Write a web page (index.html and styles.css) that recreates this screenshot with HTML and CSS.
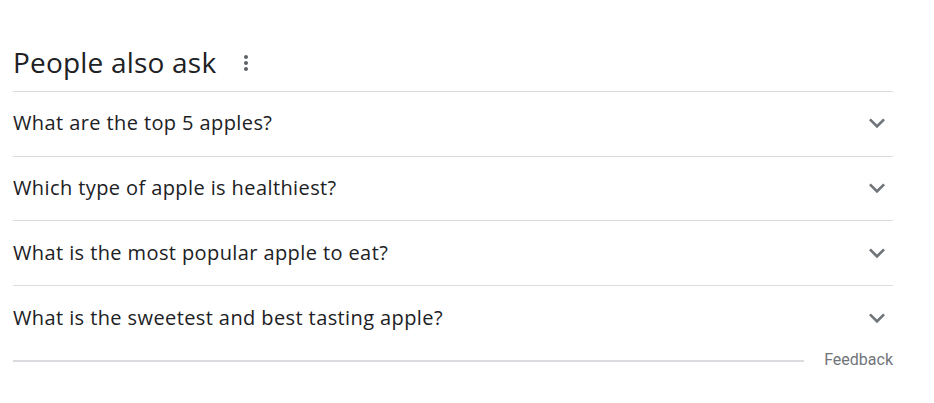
FILE: index.html
```html
<!DOCTYPE html>
<html>
<head>
<meta charset="utf-8">
<link rel="stylesheet" href="styles.css">
</head>
<body>
<div class="paa">
  <div class="head">
    <h2 class="title">People also ask</h2>
    <span class="more">
      <svg width="24" height="24" viewBox="0 0 24 24"><path fill="#5f6368" d="M12 8c1.1 0 2-.9 2-2s-.9-2-2-2-2 .9-2 2 .9 2 2 2zm0 2c-1.1 0-2 .9-2 2s.9 2 2 2 2-.9 2-2-.9-2-2-2zm0 6c-1.1 0-2 .9-2 2s.9 2 2 2 2-.9 2-2-.9-2-2-2z"/></svg>
    </span>
  </div>
  <div class="list">
    <div class="row"><span class="q">What are the top 5 apples?</span><svg class="chev" width="32" height="32" viewBox="0 0 24 24"><path fill="#70757a" d="M16.59 8.59L12 13.17 7.41 8.59 6 10l6 6 6-6z"/></svg></div>
    <div class="row"><span class="q">Which type of apple is healthiest?</span><svg class="chev" width="32" height="32" viewBox="0 0 24 24"><path fill="#70757a" d="M16.59 8.59L12 13.17 7.41 8.59 6 10l6 6 6-6z"/></svg></div>
    <div class="row"><span class="q">What is the most popular apple to eat?</span><svg class="chev" width="32" height="32" viewBox="0 0 24 24"><path fill="#70757a" d="M16.59 8.59L12 13.17 7.41 8.59 6 10l6 6 6-6z"/></svg></div>
    <div class="row"><span class="q">What is the sweetest and best tasting apple?</span><svg class="chev" width="32" height="32" viewBox="0 0 24 24"><path fill="#70757a" d="M16.59 8.59L12 13.17 7.41 8.59 6 10l6 6 6-6z"/></svg></div>
  </div>
  <div class="foot">
    <div class="line"></div>
    <span class="fb">Feedback</span>
  </div>
</div>
</body>
</html>
```
FILE: styles.css
```css
body {
  margin: 0;
  background: #fff;
  font-family: "Open Sans", Roboto, Arial, sans-serif;
  color: #202124;
}
.paa {
  width: 880px;
  margin-left: 13px;
  padding-top: 40px;
}
.head {
  display: flex;
  align-items: center;
  height: 52px;
  border-bottom: 1px solid #dadce0;
  box-sizing: border-box;
}
.title {
  margin: 0;
  font-weight: 400;
  font-size: 28px;
  letter-spacing: 0.2px;
  line-height: 40px;
  margin-top: -7px;
}
.more {
  display: flex;
  margin-left: 18px;
  margin-top: -6px;
}
.row {
  display: flex;
  align-items: center;
  justify-content: space-between;
  height: 64.7px;
  border-bottom: 1px solid #dadce0;
  box-sizing: border-box;
}
.row:last-child { border-bottom: none; }
.q {
  font-size: 20px;
  letter-spacing: 0.4px;
  margin-top: -2px;
}
.chev { margin-right: 0; margin-top: -1px; }
.foot {
  display: flex;
  align-items: center;
  height: 30px;
  margin-top: -5px;
}
.line {
  flex: 1;
  height: 2px;
  background: #dadce0;
  margin-right: 20px;
}
.fb {
  font-family: Roboto, Arial, sans-serif;
  font-size: 16px;
  color: #70757a;
  margin-top: -3px;
}
```
